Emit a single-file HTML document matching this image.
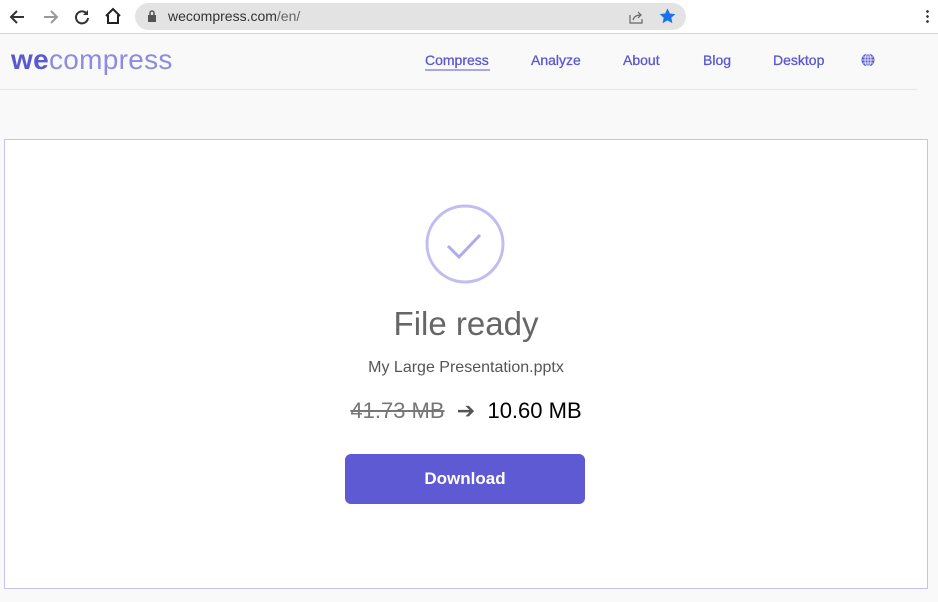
<!DOCTYPE html>
<html><head><style>
body{margin:0;width:938px;height:602px;overflow:hidden;background:#f9f9f9;font-family:"Liberation Sans",sans-serif;position:relative}
.bar{position:absolute;left:0;top:0;width:938px;height:33px;background:#fff;border-bottom:1px solid #d5d5d5}
.url{position:absolute;left:135px;top:3px;width:551px;height:27px;border-radius:14px;background:#e3e3e3}
.abs{position:absolute}
.nav a{position:absolute;top:52px;font-size:14px;color:#5b59cf;text-decoration:none;-webkit-text-stroke:0.3px #5b59cf}
.card{position:absolute;left:4px;top:139px;width:922px;height:448px;background:#fff;border:1px solid #c7c3ee}
.c{position:absolute;left:0;width:100%;text-align:center}
</style></head><body>
<div class="bar">
<svg class="abs" style="left:8px;top:7px" width="20" height="20"><path d="M16 10H4M9 4 3 10l6 6" stroke="#333" stroke-width="2" fill="none"/></svg>
<svg class="abs" style="left:40px;top:7px" width="20" height="20"><path d="M4 10h12M11 4l6 6-6 6" stroke="#999" stroke-width="2" fill="none"/></svg>
<svg class="abs" style="left:72px;top:7px" width="20" height="20"><path d="M15 7A6 6 0 1 0 16 11" stroke="#333" stroke-width="2" fill="none"/><path d="M16 3v5h-5z" fill="#333"/></svg>
<svg class="abs" style="left:103px;top:6px" width="20" height="20"><path d="M3 10 10 3l7 7M5 9v8h10V9" stroke="#222" stroke-width="2" fill="none"/></svg>
<div class="url"></div>
<svg class="abs" style="left:147px;top:10px" width="10" height="12"><rect x="1" y="5" width="8" height="7" fill="#555"/><path d="M3 5V3a2 2 0 0 1 4 0v2" stroke="#555" stroke-width="1.5" fill="none"/></svg>
<div class="abs" style="left:168px;top:8px;font-size:14px;color:#333">wecompress.com<span style="color:#666">/en/</span></div>
<svg class="abs" style="left:628px;top:9px" width="16" height="16"><path d="M2 6v8h12V10M5 11c1-4 4-5 8-5M10 3l3 3-3 3" stroke="#666" stroke-width="1.2" fill="none"/></svg>
<svg class="abs" style="left:659px;top:8px" width="17" height="16"><path d="M8.5 0.5l2.4 5 5.4.6-4 3.7 1.1 5.4-4.9-2.8-4.9 2.8 1.1-5.4-4-3.7 5.4-.6z" fill="#1a73e8"/></svg>
<div class="abs" style="left:926px;top:9px;width:3px;height:14px;background:radial-gradient(circle,#333 1.2px,transparent 1.5px) 0 0/3px 5px"></div>
</div>
<div class="abs" style="left:11px;top:44px;font-size:28px;color:#8e8be0;letter-spacing:0.3px"><span style="color:#5b59cf;font-weight:bold">we</span>compress</div>
<div class="nav">
<a style="left:425px">Compress</a>
<div class="abs" style="left:425px;top:69px;width:65px;height:2px;background:#aaa6ec"></div>
<a style="left:531px">Analyze</a><a style="left:623px">About</a><a style="left:703px">Blog</a><a style="left:773px">Desktop</a>
<svg class="abs" style="left:861px;top:53px" width="14" height="14"><circle cx="7" cy="7" r="6.5" fill="#5b59cf"/><path d="M1 7h12M7 1v12M2 4h10M2 10h10" stroke="#fff" stroke-width=".8"/><ellipse cx="7" cy="7" rx="3" ry="6.5" stroke="#fff" fill="none" stroke-width=".8"/></svg>
</div>
<div class="abs" style="left:0;top:89px;width:918px;height:1px;background:#e6e6e6"></div>
<div class="card">
<svg class="abs" style="left:420px;top:64px" width="80" height="80"><circle cx="40" cy="40" r="38" stroke="#c1bdf0" stroke-width="3" fill="none"/><path d="M23 42l11 11 21-22" stroke="#b0acea" stroke-width="3" fill="none"/></svg>
<div class="c" style="top:165px;font-size:33px;color:#666">File ready</div>
<div class="c" style="top:219px;font-size:16px;color:#555">My Large Presentation.pptx</div>
<div class="c" style="top:258px;font-size:22px;color:#000"><s style="color:#777">41.73 MB</s> <span style="color:#555">&nbsp;➔&nbsp;</span> 10.60 MB</div>
<div class="abs" style="left:340px;top:314px;width:240px;height:50px;background:#5d5ad3;border-radius:6px;color:#fff;font-size:17px;font-weight:bold;text-align:center;line-height:50px">Download</div>
</div>
</body></html>
